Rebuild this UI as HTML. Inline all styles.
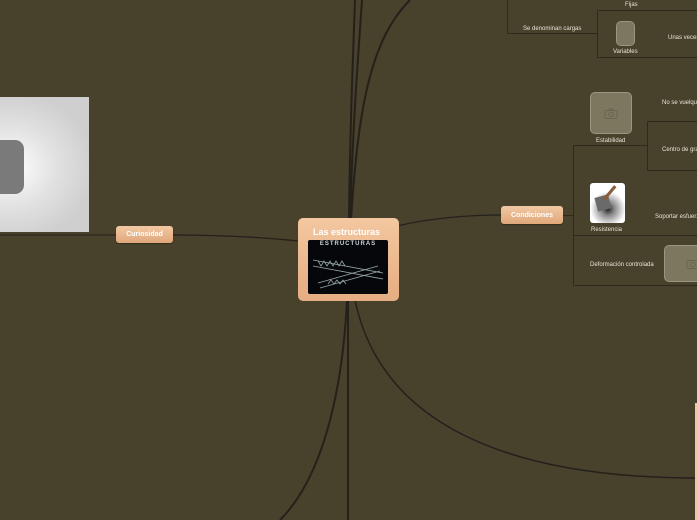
<!DOCTYPE html>
<html><head><meta charset="utf-8"><style>
body{margin:0;width:697px;height:520px;overflow:hidden;background:#48412b;font-family:"Liberation Sans",sans-serif;position:relative}
.t{position:absolute;color:#e8e4d8;font-size:6px;white-space:nowrap}
.ph{position:absolute;background:#7d775f;border:1px solid #9a9580;border-radius:5px;box-sizing:border-box}
.btn{position:absolute;background:linear-gradient(#f2c9a4,#e0a67a);border-radius:3px;color:#fff;font-weight:bold;font-size:7px;text-align:center;box-shadow:0 1px 1px rgba(0,0,0,.3)}
</style></head><body>
<svg width="697" height="520" style="position:absolute;left:0;top:0" fill="none">
<g stroke="#24211c" stroke-width="2">
<path d="M349 220 C350 120 353 60 355 0"/>
<path d="M350 220 C353 120 358 60 362 0"/>
<path d="M351 220 C358 110 370 40 410 0"/>
<path d="M348 300 L348 520"/>
<path d="M347 300 C342 400 320 480 280 520"/>
<path d="M355 300 C380 420 500 478 697 478" stroke-width="1.5"/>
<path d="M298 241 C250 236 200 235 172 235" stroke-width="1.3"/>
<path d="M397 226 C430 218 470 215 501 215" stroke-width="1.3"/>
<path d="M0 235 L118 235" stroke-width="1"/>
</g>
<g stroke="#2e2a1f" stroke-width="1">
<path d="M507.5 0 V33.5 H597.5 M597.5 10.5 H697 M597.5 10.5 V57.5 H697"/>
<path d="M563 215.5 H573.5 M573.5 145.5 V285.5 M573.5 145.5 H647.5 M647.5 121.5 V170.5 M647.5 121.5 H697 M647.5 170.5 H697 M573.5 235.5 H697 M573.5 285.5 H697"/>
</g>
</svg>
<div style="position:absolute;left:0;top:97px;width:89px;height:135px;background:radial-gradient(ellipse at 10px 70px,#fff 0,#e2e2e2 40%,#cfcfcf 75%)"></div>
<div style="position:absolute;left:-10px;top:140px;width:34px;height:54px;background:#7a7a7a;border-radius:9px"></div>
<div class="btn" style="left:116px;top:226px;width:57px;height:17px;line-height:18px">Curiosidad</div>
<div class="btn" style="left:501px;top:206px;width:62px;height:18px;line-height:20px">Condiciones</div>
<div style="position:absolute;left:298px;top:218px;width:101px;height:83px;background:linear-gradient(#f4c7a0,#e5ad82);border-radius:5px"></div>
<div style="position:absolute;left:298px;top:227px;width:97px;text-align:center;color:#fff;font-weight:bold;font-size:9px">Las estructuras</div>
<div style="position:absolute;left:308px;top:240px;width:80px;height:54px;background:#05070a;border-radius:2px;overflow:hidden">
<div style="color:#cfd6e0;font-size:6px;font-weight:bold;letter-spacing:1px;text-align:center;margin-top:1px">ESTRUCTURAS</div>
<svg width="80" height="46" style="position:absolute;top:8px;left:0" stroke="#9aa" stroke-width=".8" fill="none"><path d="M5 12 L75 25 M5 18 L75 31 M10 35 L70 18 M12 40 L72 23"/><path d="M10 13 l3 5 l3 -5 l3 5 l3 -5 l3 5 l3 -5 l3 5 l3 -5 l3 5 M20 36 l3 -4 l3 4 l3 -4 l3 4 l3 -4 l3 4"/></svg>
</div>
<div class="t" style="left:625px;top:2px">Fijas</div>
<div class="t" style="left:523px;top:26px">Se denominan cargas</div>
<div class="ph" style="left:616px;top:21px;width:19px;height:25px"></div>
<div class="t" style="left:613px;top:49px">Variables</div>
<div class="t" style="left:668px;top:35px">Unas veces</div>
<div class="ph" style="left:590px;top:92px;width:42px;height:42px"></div>
<svg width="14" height="11" style="position:absolute;left:604px;top:108px" fill="none" stroke="#6a654f" stroke-width="1"><rect x="1" y="2.5" width="12" height="8" rx="1.5"/><circle cx="7" cy="6.5" r="2.3"/><path d="M4.5 2.5 l1-1.5 h3 l1 1.5"/></svg>
<div class="t" style="left:596px;top:138px">Estabilidad</div>
<div class="t" style="left:662px;top:100px">No se vuelque</div>
<div class="t" style="left:662px;top:147px">Centro de gravedad</div>
<div style="position:absolute;left:590px;top:183px;width:35px;height:40px;background:radial-gradient(circle at 18px 26px,#222 0,#888 20%,#fff 55%);border-radius:3px"></div>
<div style="position:absolute;left:596px;top:196px;width:14px;height:14px;background:#6a6a6a;transform:rotate(-15deg)"></div>
<div style="position:absolute;left:608px;top:184px;width:3px;height:18px;background:#8a5a3a;transform:rotate(40deg)"></div>
<div class="t" style="left:591px;top:227px">Resistencia</div>
<div class="t" style="left:655px;top:214px">Soportar esfuerzos</div>
<div class="t" style="left:590px;top:262px">Deformación controlada</div>
<div class="ph" style="left:664px;top:245px;width:45px;height:37px"></div>
<svg width="14" height="11" style="position:absolute;left:686px;top:258px" fill="none" stroke="#6a654f" stroke-width="1"><rect x="1" y="2.5" width="12" height="8" rx="1.5"/><circle cx="7" cy="6.5" r="2.3"/></svg>
<div style="position:absolute;left:695px;top:403px;width:2px;height:117px;background:#f0c8a0"></div>
</body></html>
